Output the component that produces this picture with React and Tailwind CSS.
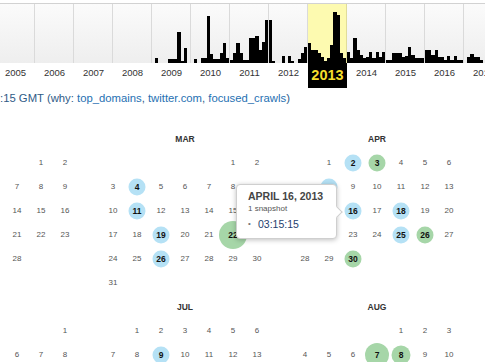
import React from 'react'

const BARS = {
  2005: [0,0,0,0,0,0,0,0,0,0,0,0],
  2006: [0,0,0,0,0,0,0,0,0,0,0,0],
  2007: [0,0,0,0,0,0,0,0,0,0,0,0],
  2008: [0,0,0,0,0,0,0,0,0,0,0,0],
  2009: [0,5,0,0,0,4,4,4,31,2,15,0],
  2010: [0,4,0,5,5,47,9,4,4,10,20,5],
  2011: [3,10,20,10,3,3,25,25,27,13,21,43],
  2012: [43,2,0,0,7,0,7,2,0,4,10,16],
  2013: [20,13,13,10,6,2,5,18,51,48,10,5],
  2014: [11,5,25,13,8,5,6,11,5,11,6,11],
  2015: [3,3,10,10,10,6,7,16,8,5,5,5],
  2016: [13,13,8,13,6,6,3,7,3,7,3,3],
  2017: [0,6,9,6,6,3,0,0,0,0,0,0],
}

const MONTHS = ['JAN','FEB','MAR','APR','MAY','JUN','JUL','AUG','SEP','OCT','NOV','DEC']

const DOT = {
  b: 'w-[17px] h-[17px] bg-[#b5e1f5]',
  g: 'w-[17px] h-[17px] bg-[#a6d6a8]',
  g19: 'w-[19px] h-[19px] bg-[#a6d6a8]',
  g24: 'w-[24px] h-[24px] bg-[#a6d6a8]',
  g28: 'w-[28px] h-[28px] bg-[#a6d6a8]',
}

// month index -> day -> dot style
const SNAPS = {
  2: {4:'b',11:'b',19:'b',22:'g28',26:'b'},
  3: {2:'b',3:'g',8:'b',16:'b',18:'b',25:'b',26:'g',30:'g'},
  6: {9:'b'},
  7: {7:'g24',8:'g19'},
}

// months whose heading is scrolled out of view on the left
const CUT = [1, 5]

const Month = ({m}) => {
  const first = new Date(2013, m, 1).getDay()
  const count = new Date(2013, m + 1, 0).getDate()
  const cells = []
  for (let i = 0; i < 42; i++) {
    const d = i - first + 1
    cells.push(d >= 1 && d <= count ? d : null)
  }
  const snaps = SNAPS[m] || {}
  return (
    <div className="w-[168px] shrink-0">
      <div className="h-[24px] flex items-center justify-center text-[8.5px] font-bold text-[#333]">{CUT.includes(m) ? '' : MONTHS[m]}</div>
      <div className="grid grid-cols-7">
        {cells.map((d, i) => (
          <div key={i} className="relative h-[24px] flex items-center justify-center">
            {d && snaps[d] && (
              <span className={'absolute left-1/2 top-1/2 -translate-x-1/2 -translate-y-1/2 rounded-full ' + DOT[snaps[d]]} />
            )}
            {d && (
              <span className={snaps[d] ? 'relative text-[8.5px] font-bold text-[#111]' : 'relative text-[8px] text-[#555]'}>{d}</span>
            )}
          </div>
        ))}
      </div>
    </div>
  )
}

export default function App() {
  const years = Object.keys(BARS).map(Number)
  return (
    <div className="relative w-[485px] h-[362px] overflow-hidden bg-white" style={{fontFamily: '"Liberation Sans", Arial, sans-serif'}}>
      <div className="h-[3px]" />
      <div className="flex h-[60px] ml-[-4px] border-t border-[#d2d2d2] bg-linear-to-b from-[#fbfbfb] to-[#eeeeee]">
        {years.map(y => (
          <div key={y} className={y === 2013 ? 'flex w-[39px] shrink-0 items-end border-r border-[#e0dc9a] bg-[#fdfab0]' : 'flex w-[39px] shrink-0 items-end border-r border-[#dadada]'}>
            {BARS[y].map((h, i) => (
              <div key={i} className="flex-1 bg-black" style={{height: h}} />
            ))}
          </div>
        ))}
      </div>
      <div className="flex h-[25px] ml-[-4px]">
        {years.map(y => y === 2013 ? (
          <div key={y} className="w-[39px] shrink-0 flex items-center justify-center bg-black text-[14.5px] font-bold text-[#f6de2c]">{y}</div>
        ) : (
          <div key={y} className="w-[39px] shrink-0 pt-[3px] text-center text-[9.5px] leading-[14px] text-[#333]">{y}</div>
        ))}
      </div>
      <div className="h-[20px] leading-[20px] text-[11.3px] text-[#2f5b86] whitespace-nowrap">
        :15 GMT (why: <a className="text-[#2670b2]">top_domains</a>, <a className="text-[#2670b2]">twitter.com</a>, <a className="text-[#2670b2]">focused_crawls</a>)
      </div>
      <div className="mt-[19px] ml-[-91px] flex flex-col">
        <div className="flex gap-[24px]">
          {[1,2,3,4].map(m => <Month key={m} m={m} />)}
        </div>
        <div className="flex gap-[24px]">
          {[5,6,7,8].map(m => <Month key={m} m={m} />)}
        </div>
      </div>
      <div className="absolute left-[236px] top-[184px] w-[101px] h-[55px] bg-white border border-[#cfcfcf] rounded-[4px] shadow-[0_1px_5px_rgba(0,0,0,0.25)] px-[11px] pt-[4px]">
        <div className="absolute right-[-5px] top-[23px] w-[8px] h-[8px] rotate-45 bg-white border-t border-r border-[#cfcfcf]" />
        <div className="text-[10.5px] font-bold leading-[14px] text-[#454545] whitespace-nowrap">APRIL 16, 2013</div>
        <div className="text-[8px] leading-[12px] text-[#555]">1 snapshot</div>
        <div className="mt-[2px] flex items-center text-[10.5px] leading-[14px]">
          <span className="text-[8px] text-[#777] w-[10px]">•</span>
          <span className="text-[#1f3e6e]">03:15:15</span>
        </div>
      </div>
    </div>
  )
}
